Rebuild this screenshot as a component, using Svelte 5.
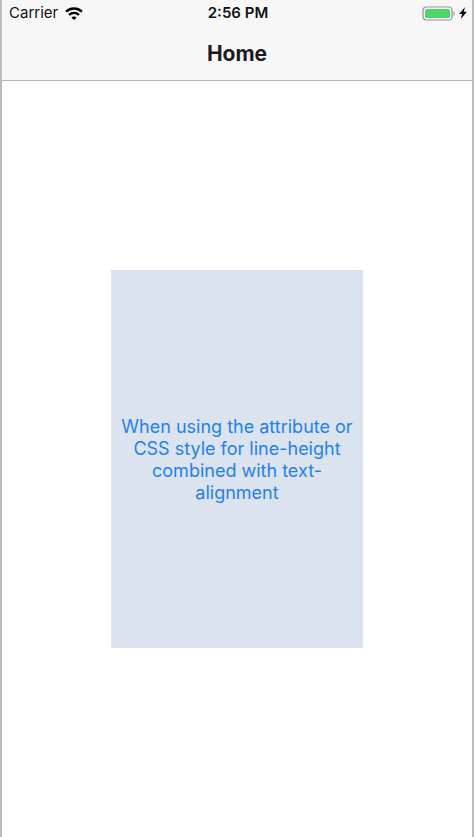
<script lang="ts">
  type Props = {
    carrier?: string;
    time?: string;
    title?: string;
    label?: string;
  };

  let {
    carrier = "Carrier",
    time = "2:56 PM",
    title = "Home",
    label = "When using the attribute or CSS style for line-height combined with text-alignment",
  }: Props = $props();
</script>

<div class="screen">
  <header>
    <div class="status">
      <div class="network">
        <span>{carrier}</span>
        <svg class="wifi" viewBox="0 0 18 13" role="img" aria-label="Wi-Fi">
          <path d="M1.1 4.7C5.6.5 12.4.5 16.9 4.7" />
          <path d="M4 7.9c2.9-2.5 7.1-2.5 10 0" />
          <path class="dot" d="M6.3 10.4c1.6-1.3 3.8-1.3 5.4 0L9 13z" />
        </svg>
      </div>
      <span class="time">{time}</span>
      <div class="power">
        <svg class="battery" viewBox="0 0 34 15" role="img" aria-label="Battery">
          <rect class="shell" x="1" y="1" width="29" height="13" rx="3.5" />
          <rect class="charge" x="3" y="3" width="25" height="9" rx="1.5" />
          <path class="cap" d="M31.5 5.2c1.6.6 1.6 4 0 4.6z" />
        </svg>
        <svg class="bolt" viewBox="0 0 8 12" role="img" aria-label="Charging">
          <path d="M6 0 .2 6.9h2.9L1.8 12 7.9 4.8H4.8z" />
        </svg>
      </div>
    </div>
    <h1>{title}</h1>
  </header>

  <main>
    <button type="button">{label}</button>
  </main>
</div>

<style>
  :global(body) {
    margin: 0;
    background: #fff;
  }

  .screen {
    box-sizing: border-box;
    display: flex;
    flex-direction: column;
    min-height: 100vh;
    border: solid #bdbdbd;
    border-width: 0 2px;
    font-family: Inter, "Liberation Sans", sans-serif;
    color: #111;
  }

  header {
    padding-bottom: 12px;
    background: #f7f7f7;
    border-bottom: 1px solid #b6b6b6;
  }

  .status {
    display: grid;
    grid-template-columns: 1fr auto 1fr;
    align-items: center;
    height: 26px;
    padding: 0 5px 0 7px;
    font-size: 15px;
    line-height: 26px;
  }

  .network,
  .power {
    display: flex;
    align-items: center;
  }

  .network {
    gap: 7px;
  }

  .power {
    justify-content: flex-end;
    gap: 3px;
  }

  .time {
    font-weight: 600;
  }

  .wifi {
    width: 18px;
    height: 13px;
    fill: none;
    stroke: #000;
    stroke-width: 2.5;
  }

  .wifi .dot {
    fill: #000;
    stroke: none;
  }

  .battery {
    width: 34px;
    height: 15px;
  }

  .shell {
    fill: #fff;
    stroke: #929292;
    stroke-width: 1.2;
  }

  .charge {
    fill: #4cd663;
  }

  .cap {
    fill: #929292;
  }

  .bolt {
    width: 8px;
    height: 12px;
  }

  h1 {
    margin: 0;
    padding-top: 14px;
    font-size: 21px;
    font-weight: 700;
    line-height: 28px;
    text-align: center;
    color: #1c1c1e;
  }

  main {
    display: flex;
    flex: 1;
    align-items: center;
    justify-content: center;
  }

  button {
    box-sizing: border-box;
    width: 54%;
    max-width: 252px;
    aspect-ratio: 2 / 3;
    padding: 2px 4px 0;
    border: 0;
    background: #dbe3ee;
    color: #1f80f0;
    font-family: inherit;
    font-size: 18px;
    line-height: 22px;
    text-align: center;
  }
</style>
